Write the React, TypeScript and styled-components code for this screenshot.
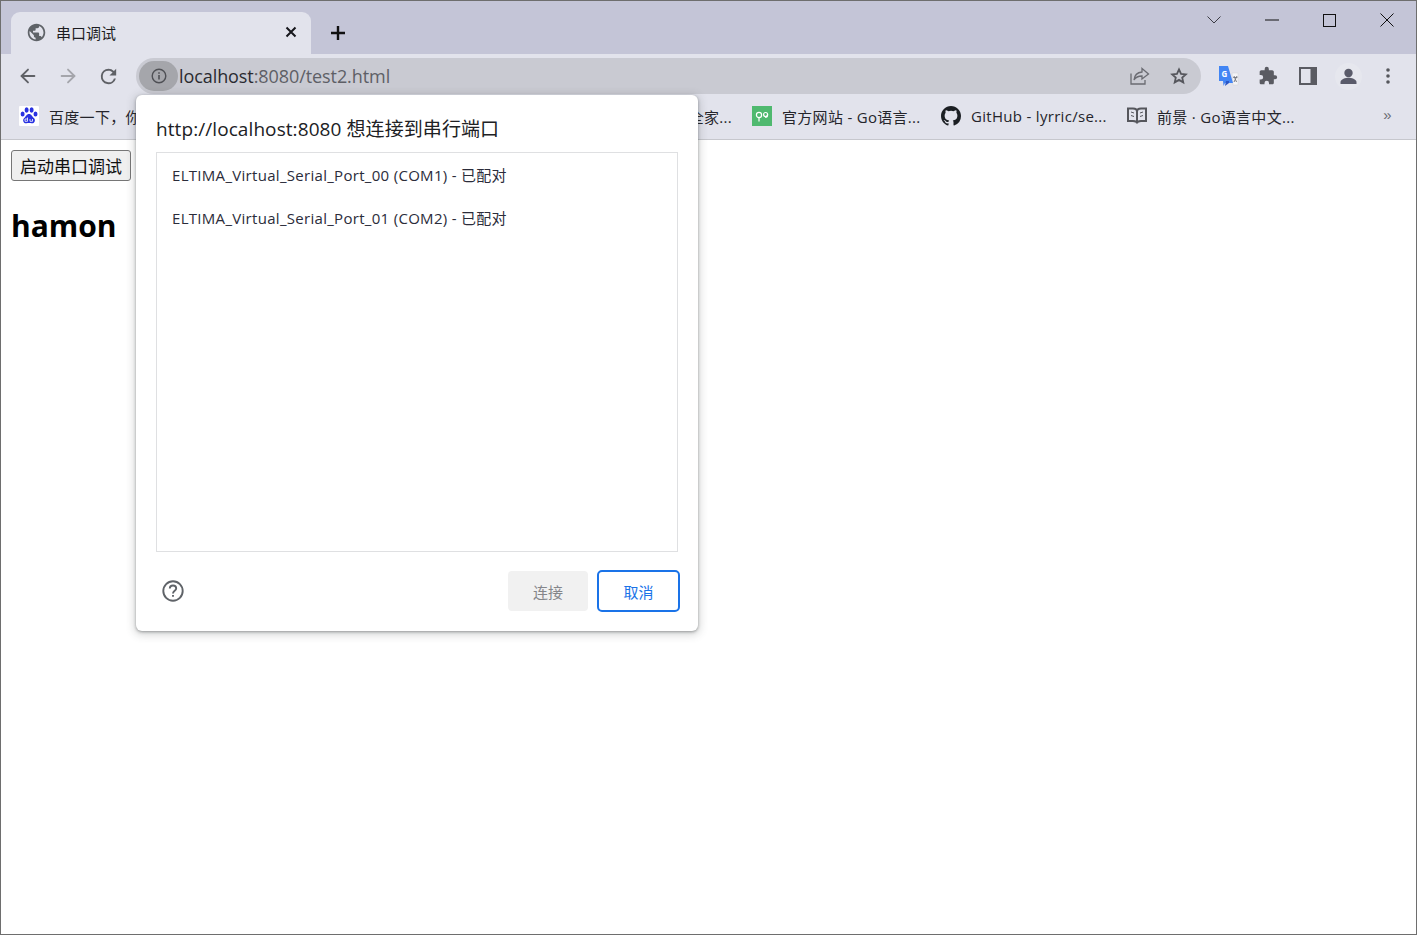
import React from 'react';
import styled, { createGlobalStyle } from 'styled-components';
import { FiArrowLeft, FiArrowRight } from 'react-icons/fi';

const UI_FONT = '"Open Sans", "Noto Sans CJK SC", sans-serif';

const GlobalStyle = createGlobalStyle`
  html, body { margin: 0; padding: 0; height: 100%; background: #fff; overflow: hidden; }
  #root { height: 100%; }
  * { box-sizing: border-box; }
  svg { flex-shrink: 0; }
`;

const Frame = styled.div`
  position: relative;
  width: 1417px;
  height: 935px;
  border: 1px solid #6e6e6e;
  display: flex;
  flex-direction: column;
  font-family: ${UI_FONT};
  overflow: hidden;
`;

const TabStrip = styled.div`
  height: 53px;
  background: #c4c5d7;
  display: flex;
  align-items: flex-end;
  padding-left: 10px;
  flex-shrink: 0;
`;

const Tab = styled.div`
  width: 300px;
  height: 42px;
  background: #e2e3ec;
  border-radius: 9px 9px 0 0;
  display: flex;
  align-items: center;
  padding: 0 14px 2px 15px;
  font-size: 15px;
  color: #1c1c22;
`;

const TabTitle = styled.span`
  margin-left: 9px;
  flex: 1;
`;

const NewTab = styled.div`
  width: 20px;
  height: 20px;
  margin: 0 0 11px 17px;
  display: flex;
`;

const WindowControls = styled.div`
  margin-left: auto;
  align-self: flex-start;
  display: flex;
  align-items: center;
  height: 38px;
  padding-right: 22px;
  gap: 44px;
`;

const Toolbar = styled.div`
  height: 42px;
  background: #e2e3ec;
  display: flex;
  align-items: center;
  padding: 2px 0 0 16px;
  flex-shrink: 0;
`;

const NavButton = styled.div<{ $muted?: boolean }>`
  width: 22px;
  height: 22px;
  margin-right: 18px;
  display: flex;
  align-items: center;
  justify-content: center;
  color: ${p => (p.$muted ? '#a4a5ab' : '#5f6166')};
  font-size: 20px;
`;

const Omnibox = styled.div`
  width: 1065px;
  height: 36px;
  margin-left: -1px;
  background: #c9cad2;
  border-radius: 18px;
  display: flex;
  align-items: center;
  padding: 0 3px;
  font-size: 18px;
  letter-spacing: -0.08px;
  flex-shrink: 0;
`;

const SiteChip = styled.div`
  width: 39px;
  height: 30px;
  background: #a5a6ab;
  border-radius: 15px;
  display: flex;
  align-items: center;
  justify-content: center;
  flex-shrink: 0;
  margin-right: 1px;
`;

const Host = styled.span`
  color: #2a2a30;
`;

const UrlRest = styled.span`
  color: #5e5f66;
`;

const OmniActions = styled.div`
  margin-left: auto;
  display: flex;
  align-items: center;
  gap: 20px;
  padding-right: 10px;
`;

const ToolIcons = styled.div`
  display: flex;
  align-items: center;
  margin-left: 7px;
`;

const ToolIcon = styled.div`
  width: 40px;
  height: 32px;
  display: flex;
  align-items: center;
  justify-content: center;
`;

const BookmarkBar = styled.div`
  height: 44px;
  background: #e2e3ec;
  border-bottom: 1px solid #c6c7cd;
  display: flex;
  align-items: center;
  padding: 0 0 3px 18px;
  font-size: 15px;
  letter-spacing: 0.3px;
  color: #25252b;
  position: relative;
  flex-shrink: 0;
  white-space: nowrap;
`;

const Bookmark = styled.div<{ $width: number }>`
  width: ${p => p.$width}px;
  display: flex;
  align-items: center;
  gap: 10px;
  flex-shrink: 0;
  overflow: hidden;
`;

const HiddenBookmarks = styled.div`
  width: 593px;
  margin-right: 20px;
  text-align: right;
  flex-shrink: 0;
  overflow: hidden;
`;

const More = styled.div`
  position: absolute;
  right: 24px;
  top: 10px;
  font-size: 15px;
  color: #6a6b72;
  font-family: "Liberation Sans", sans-serif;
`;

const Page = styled.div`
  flex: 1;
  background: #fff;
  padding: 10px 10px;
  font-family: "Noto Sans CJK SC", "Open Sans", sans-serif;
`;

const PageButton = styled.button`
  display: block;
  width: 120px;
  height: 31px;
  padding: 0;
  background: #efefef;
  border: 1px solid #767676;
  border-radius: 3px;
  font-family: inherit;
  font-size: 17px;
  color: #111;
`;

const Heading = styled.h2`
  margin: 24px 0 0;
  font-family: "Open Sans", sans-serif;
  font-size: 30px;
  line-height: 42px;
  font-weight: 700;
  color: #000;
`;

const Dialog = styled.div`
  position: absolute;
  left: 135px;
  top: 94px;
  width: 562px;
  height: 536px;
  background: #fff;
  border-radius: 6px;
  box-shadow: 0 1px 3px rgba(60, 64, 67, 0.45), 0 2px 8px 2px rgba(60, 64, 67, 0.2);
  padding: 22px 20px 0;
  display: flex;
  flex-direction: column;
`;

const DialogTitle = styled.div`
  font-size: 19px;
  letter-spacing: 0.08px;
  line-height: 24px;
  color: #202124;
  height: 35px;
  white-space: nowrap;
`;

const PortList = styled.div`
  width: 522px;
  height: 400px;
  border: 1px solid #dfe0e2;
  flex-shrink: 0;
`;

const PortRow = styled.div`
  height: 43px;
  padding: 0 0 1px 15px;
  display: flex;
  align-items: center;
  font-size: 15px;
  letter-spacing: 0.3px;
  color: #2b2c3a;
  white-space: nowrap;
`;

const DialogFooter = styled.div`
  display: flex;
  align-items: center;
  margin-top: 18px;
  padding-left: 6px;
`;

const FooterButtons = styled.div`
  margin-left: auto;
  margin-right: -2px;
  display: flex;
  align-items: center;
  gap: 9px;
`;

const ActionButton = styled.div<{ $focused?: boolean }>`
  width: ${p => (p.$focused ? '83px' : '80px')};
  height: ${p => (p.$focused ? '42px' : '40px')};
  display: flex;
  align-items: center;
  justify-content: center;
  font-size: 15px;
  border-radius: ${p => (p.$focused ? '5px' : '4px')};
  background: ${p => (p.$focused ? '#fff' : '#f1f1f1')};
  color: ${p => (p.$focused ? '#1a73e8' : '#85868a')};
  border: ${p => (p.$focused ? '2px solid #1a73e8' : 'none')};
`;

const Globe = () => (
  <svg width="21" height="21" viewBox="0 0 24 24" fill="#5f6368">
    <path d="M12 2C6.48 2 2 6.48 2 12s4.48 10 10 10 10-4.48 10-10S17.52 2 12 2zm-1 17.93c-3.95-.49-7-3.85-7-7.93 0-.62.08-1.21.21-1.79L9 15v1c0 1.1.9 2 2 2v1.93zm6.9-2.54c-.26-.81-1-1.39-1.9-1.39h-1v-3c0-.55-.45-1-1-1H8v-2h2c.55 0 1-.45 1-1V7h2c1.1 0 2-.9 2-2v-.41c2.93 1.19 5 4.06 5 7.41 0 2.08-.8 3.97-2.1 5.39z" />
  </svg>
);

const CloseMark = () => (
  <svg width="12" height="12" viewBox="0 0 12 12" stroke="#17171c" strokeWidth="2" fill="none">
    <path d="M1.5 1.5l9 9M10.5 1.5l-9 9" />
  </svg>
);

const PlusMark = () => (
  <svg width="20" height="20" viewBox="0 0 20 20" stroke="#111" strokeWidth="2.4" fill="none">
    <path d="M10 3v14M3 10h14" />
  </svg>
);

const Chevron = () => (
  <svg width="14" height="8" viewBox="0 0 14 8" stroke="#3c3c44" fill="none">
    <path d="M.5.5L7 7l6.5-6.5" />
  </svg>
);

const MinMark = () => (
  <svg width="14" height="2" viewBox="0 0 14 2" stroke="#111" fill="none">
    <path d="M0 1h14" />
  </svg>
);

const MaxMark = () => (
  <svg width="13" height="13" viewBox="0 0 13 13" stroke="#111" fill="none">
    <rect x=".5" y=".5" width="12" height="12" />
  </svg>
);

const XMark = () => (
  <svg width="14" height="14" viewBox="0 0 14 14" stroke="#111" fill="none">
    <path d="M.5.5l13 13M13.5.5l-13 13" />
  </svg>
);

const Reload = () => (
  <svg width="23" height="23" viewBox="0 0 24 24" fill="#5f6166">
    <path d="M17.65 6.35A7.96 7.96 0 0 0 12 4a8 8 0 1 0 7.73 10h-2.08A6 6 0 1 1 12 6c1.66 0 3.14.69 4.22 1.78L13 11h7V4l-2.35 2.35z" />
  </svg>
);

const InfoIcon = () => (
  <svg width="16" height="16" viewBox="0 0 16 16" fill="none" stroke="#4f5055" strokeWidth="1.4">
    <circle cx="8" cy="8" r="6.8" />
    <path d="M8 7v4.5" strokeWidth="1.6" />
    <path d="M8 4.2v1.6" strokeWidth="1.6" />
  </svg>
);

const ShareIcon = () => (
  <svg width="20" height="18" viewBox="0 0 20 18" fill="none" stroke="#6a6b72" strokeWidth="1.3">
    <path d="M1 6.5v10.5h14v-4" />
    <path d="M12 1.5l6.5 5.5-6.5 5V9C8 9 5.5 10.5 4 13c.4-4.5 3.5-7.5 8-8z" />
  </svg>
);

const StarIcon = () => (
  <svg width="18" height="18" viewBox="0 0 24 24" fill="none" stroke="#55565c" strokeWidth="2.4">
    <path d="M12 3.2l2.7 5.9 6.4.7-4.8 4.3 1.4 6.4L12 17.2l-5.7 3.3 1.4-6.4-4.8-4.3 6.4-.7z" />
  </svg>
);

const TranslateIcon = () => (
  <svg width="21" height="22" viewBox="0 0 21 22">
    <path d="M14 8h6v12h-5z" fill="#f4f4f6" stroke="#d0d0d6" strokeWidth=".5" />
    <path d="M16 11l2.5 6M19 11l-3 6M15.2 12.5h4.2" stroke="#7a7c85" strokeWidth="1" fill="none" />
    <path d="M1 1h9l5 17H7l-1.5 3L5 16H1z" fill="#4285f4" />
    <path d="M11 16l-3 0-1 5 4-3z" fill="#2a56c6" />
    <text x="3.6" y="11.5" fontSize="8" fontWeight="700" fill="#fff" fontFamily="Open Sans, sans-serif">G</text>
  </svg>
);

const PuzzleIcon = () => (
  <svg width="20" height="20" viewBox="0 0 24 24" fill="#5a5b62">
    <path d="M20.5 11H19V7c0-1.1-.9-2-2-2h-4V3.5a2.5 2.5 0 0 0-5 0V5H4c-1.1 0-2 .9-2 2v3.8h1.5a2.7 2.7 0 0 1 0 5.4H2V20c0 1.1.9 2 2 2h3.8v-1.5a2.7 2.7 0 0 1 5.4 0V22H17c1.1 0 2-.9 2-2v-4h1.5a2.5 2.5 0 0 0 0-5z" />
  </svg>
);

const SidePanel = () => (
  <svg width="18" height="18" viewBox="0 0 18 18">
    <rect width="18" height="18" fill="#5a5b62" />
    <rect x="2" y="2" width="9.5" height="14" fill="#e2e3ec" />
  </svg>
);

const ProfileIcon = () => (
  <svg width="27" height="27" viewBox="0 0 27 27">
    <circle cx="13.5" cy="13.5" r="13.5" fill="#e6e7ee" />
    <g fill="#5a5b6a">
      <circle cx="13.5" cy="10" r="4.2" />
      <path d="M5.500 21v-2c0-2.800 5.300-4.300 8-4.300s8 1.500 8 4.300v2z" />
    </g>
  </svg>
);

const DotsIcon = () => (
  <svg width="4" height="16" viewBox="0 0 4 16" fill="#55565c">
    <circle cx="2" cy="2" r="1.8" />
    <circle cx="2" cy="8" r="1.8" />
    <circle cx="2" cy="14" r="1.8" />
  </svg>
);

const BaiduIcon = () => (
  <svg width="20" height="20" viewBox="0 0 20 20">
    <rect width="20" height="20" rx="1" fill="#fff" />
    <g fill="#2932e1">
      <ellipse cx="3.6" cy="8" rx="2" ry="2.5" />
      <ellipse cx="7.6" cy="4" rx="2" ry="2.7" />
      <ellipse cx="12.6" cy="4" rx="2" ry="2.7" />
      <ellipse cx="16.5" cy="8" rx="2" ry="2.5" />
      <path d="M10 8c-2.500 0-3 2.500-4.800 4-2 1.600-1 5.800 2.300 5.300 1-.2 1.700-.4 2.500-.4s1.600.2 2.600.4c3.200.5 4.300-3.700 2.300-5.300C13 10.500 12.500 8 10 8z" />
    </g>
    <path d="M8.500 11.500v3.800H6v-2.300h2.500M11 13v2.300h2.500V13" stroke="#fff" strokeWidth=".8" fill="none" />
  </svg>
);

const GoIcon = () => (
  <svg width="20" height="20" viewBox="0 0 20 20">
    <rect width="20" height="20" fill="#4fb96f" />
    <g stroke="#fff" fill="none" strokeWidth="1.2">
      <circle cx="7" cy="9" r="2.6" />
      <path d="M7 11.600v4" />
      <circle cx="13.600" cy="8.500" r="2" />
      <path d="M15.600 8.500c0 2-1 3-2.500 3" />
    </g>
  </svg>
);

const GithubIcon = () => (
  <svg width="20" height="20" viewBox="0 0 16 16" fill="#1b1f23">
    <path d="M8 0C3.58 0 0 3.58 0 8c0 3.54 2.29 6.53 5.47 7.59.4.07.55-.17.55-.38v-1.34c-2.23.48-2.7-1.07-2.7-1.07-.36-.92-.89-1.17-.89-1.17-.73-.5.05-.49.05-.49.8.06 1.23.82 1.23.82.72 1.23 1.87.87 2.33.66.07-.52.28-.87.51-1.07-1.78-.2-3.64-.89-3.64-3.95 0-.87.31-1.59.82-2.15-.08-.2-.36-1.02.08-2.12 0 0 .67-.21 2.2.82a7.6 7.6 0 0 1 4 0c1.53-1.04 2.2-.82 2.2-.82.44 1.1.16 1.92.08 2.12.51.56.82 1.27.82 2.15 0 3.07-1.87 3.75-3.65 3.95.29.25.54.73.54 1.48v2.2c0 .21.15.46.55.38A8 8 0 0 0 16 8c0-4.420-3.580-8-8-8z" />
  </svg>
);

const BookIcon = () => (
  <svg width="20" height="18" viewBox="0 0 20 18" fill="none" stroke="#55565c" strokeWidth="2">
    <path d="M1 1.500h5c2 0 4 1 4 3v12c0-2-2-2.500-4-2.500H1zM19 1.500h-5c-2 0-4 1-4 3v12c0-2 2-2.500 4-2.500h5z" />
    <path d="M4 5l3 1M4 8.500l3 1M13 6l3-1M13 9.500l3-1" strokeWidth="1" />
  </svg>
);

const HelpIcon = () => (
  <svg width="22" height="22" viewBox="0 0 22 22" fill="none" stroke="#5f6368" strokeWidth="1.9">
    <circle cx="11" cy="11" r="9.7" />
    <path d="M7.800 8.500c0-1.800 1.400-3 3.200-3s3.200 1.200 3.200 2.900c0 2.300-3.200 2.500-3.200 5" />
    <path d="M11 15v1.800" />
  </svg>
);

const ports = [
  'ELTIMA_Virtual_Serial_Port_00 (COM1) - 已配对',
  'ELTIMA_Virtual_Serial_Port_01 (COM2) - 已配对',
];

export default function App() {
  return (
    <>
      <GlobalStyle />
      <Frame>
        <TabStrip>
          <Tab>
            <Globe />
            <TabTitle>串口调试</TabTitle>
            <CloseMark />
          </Tab>
          <NewTab>
            <PlusMark />
          </NewTab>
          <WindowControls>
            <Chevron />
            <MinMark />
            <MaxMark />
            <XMark />
          </WindowControls>
        </TabStrip>
        <Toolbar>
          <NavButton><FiArrowLeft size={22} /></NavButton>
          <NavButton $muted><FiArrowRight size={22} /></NavButton>
          <NavButton><Reload /></NavButton>
          <Omnibox>
            <SiteChip><InfoIcon /></SiteChip>
            <Host>localhost</Host>
            <UrlRest>:8080/test2.html</UrlRest>
            <OmniActions>
              <ShareIcon />
              <StarIcon />
            </OmniActions>
          </Omnibox>
          <ToolIcons>
            <ToolIcon><TranslateIcon /></ToolIcon>
            <ToolIcon><PuzzleIcon /></ToolIcon>
            <ToolIcon><SidePanel /></ToolIcon>
            <ToolIcon><ProfileIcon /></ToolIcon>
            <ToolIcon><DotsIcon /></ToolIcon>
          </ToolIcons>
        </Toolbar>
        <BookmarkBar>
          <Bookmark $width={120}><BaiduIcon />百度一下，你就知道</Bookmark>
          <HiddenBookmarks>全家...</HiddenBookmarks>
          <Bookmark $width={189}><GoIcon />官方网站 - Go语言...</Bookmark>
          <Bookmark $width={186}><GithubIcon />GitHub - lyrric/se...</Bookmark>
          <Bookmark $width={180}><BookIcon />前景 · Go语言中文...</Bookmark>
          <More>»</More>
        </BookmarkBar>
        <Page>
          <PageButton>启动串口调试</PageButton>
          <Heading>hamon</Heading>
        </Page>
        <Dialog>
          <DialogTitle>http://localhost:8080 想连接到串行端口</DialogTitle>
          <PortList>
            {ports.map(port => (
              <PortRow key={port}>{port}</PortRow>
            ))}
          </PortList>
          <DialogFooter>
            <HelpIcon />
            <FooterButtons>
              <ActionButton>连接</ActionButton>
              <ActionButton $focused>取消</ActionButton>
            </FooterButtons>
          </DialogFooter>
        </Dialog>
      </Frame>
    </>
  );
}
